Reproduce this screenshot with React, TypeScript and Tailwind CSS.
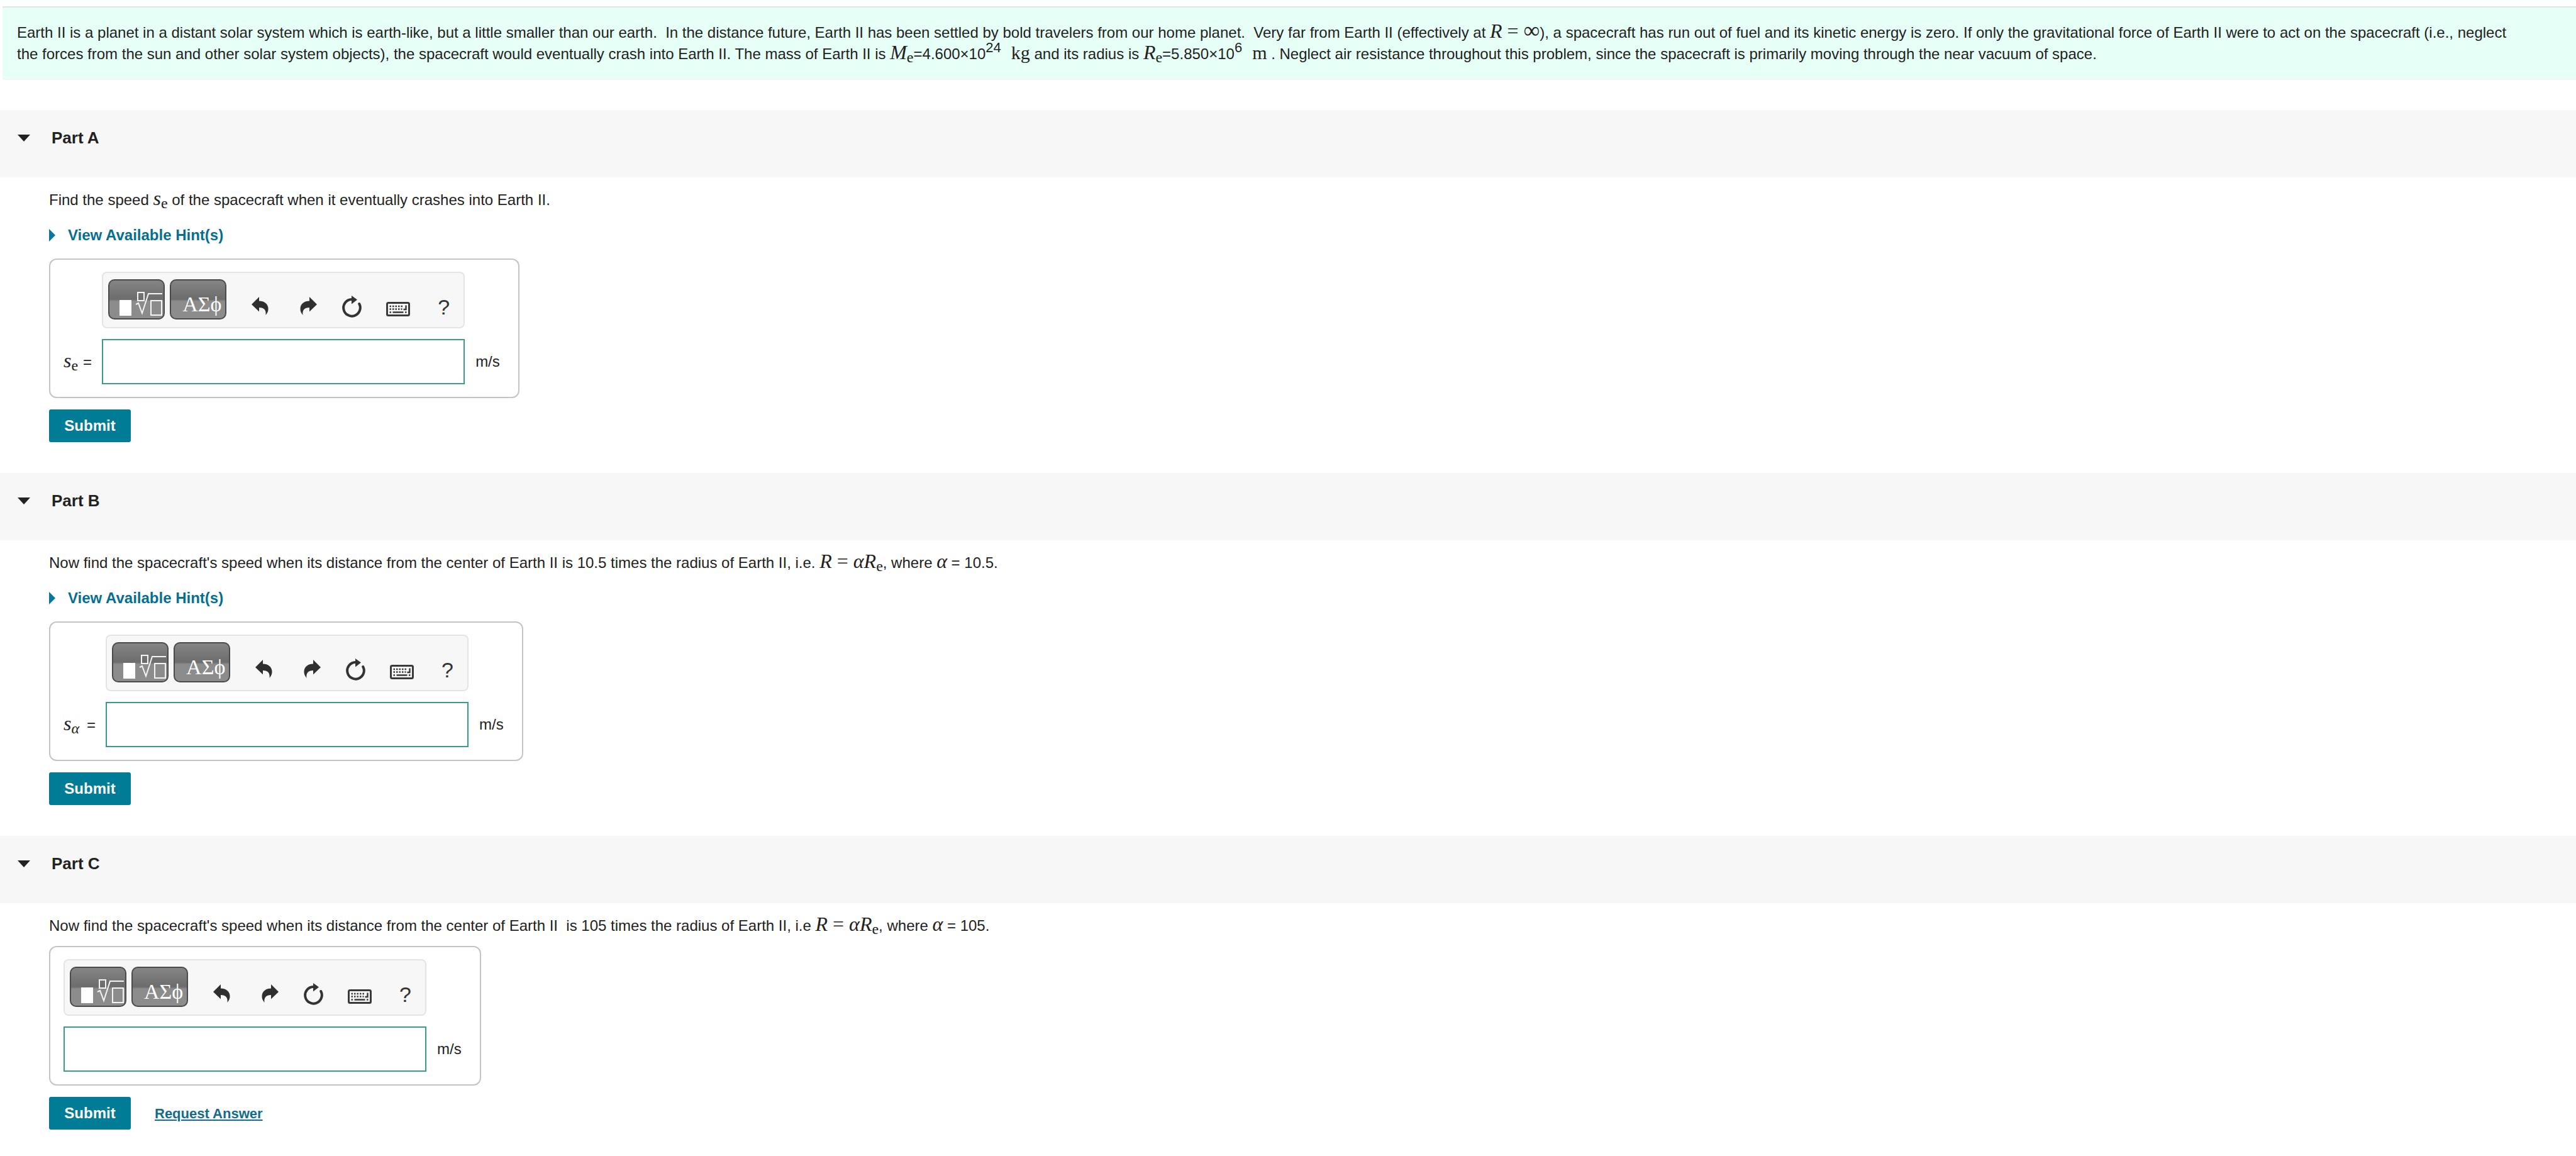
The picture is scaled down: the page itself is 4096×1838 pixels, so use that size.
import type { ReactNode } from "react";

const sans = "font-['Liberation_Sans',Arial,sans-serif]";
const serif = "font-['Liberation_Serif','Times_New_Roman',serif]";

function V({ children }: { children: ReactNode }) {
  return (
    <span className={`${serif} text-[32px] leading-none italic`}>
      {children}
    </span>
  );
}

function Sub({ children, italic = false }: { children: ReactNode; italic?: boolean }) {
  return (
    <sub className={`${serif} static align-[-5px] text-[24px] leading-none ${italic ? "mr-1 italic" : ""}`}>
      {children}
    </sub>
  );
}

function Op({ children }: { children: ReactNode }) {
  return <span className={`${serif} mx-2 text-[32px] leading-none`}>{children}</span>;
}

function Unit({ children }: { children: ReactNode }) {
  return <span className={`${serif} ml-4 text-[30px] leading-none`}>{children}</span>;
}

function Exp({ children }: { children: ReactNode }) {
  return <sup className="static align-[11px] text-[22px] leading-none">{children}</sup>;
}

function TemplatesIcon() {
  return (
    <svg viewBox="0 0 86 60" className="h-[60px] w-[86px]" fill="none" stroke="#f4f4f4" strokeWidth="2" aria-hidden="true">
      <rect x="16" y="31" width="19" height="25" fill="#fff" stroke="none" />
      <rect x="45" y="19" width="10" height="13" />
      <path d="M42 38l4-2 6 16 10-31h22" />
      <rect x="66" y="32" width="17" height="23" />
    </svg>
  );
}

function UndoIcon({ flip = false }: { flip?: boolean }) {
  return (
    <svg viewBox="0 0 28 30" className={`h-[30px] w-7 ${flip ? "-scale-x-100" : ""}`} fill="#2f2f2f" aria-hidden="true">
      <path d="M12 0v6.500C20 6.500 26 11 26.500 18 26.800 22 25.500 25.500 22.500 29 23.500 21 20 17 12 17v6.500L0 12z" />
    </svg>
  );
}

function ResetIcon() {
  return (
    <svg viewBox="0 0 32 36" className="h-9 w-8" aria-hidden="true">
      <path d="M27.200 13A13.300 13.300 0 1 1 15 6" fill="none" stroke="#333" strokeWidth="4" strokeLinecap="round" />
      <path d="M15 0l9 6.500-9 7z" fill="#333" />
    </svg>
  );
}

function KeyboardIcon() {
  return (
    <svg viewBox="0 0 38 23" className="h-[23px] w-[38px]" fill="none" stroke="#3a3a3a" aria-hidden="true">
      <rect x="1.500" y="1.500" width="35" height="20" rx="2" strokeWidth="3" />
      <path d="M5.500 7h22M5.500 11.500h20M5.500 16.500h2.500M30 16.500h2.500" strokeWidth="2.400" strokeDasharray="2.500 2" />
      <path d="M31.500 5.500v6.500h-4M10.500 16.500h17" strokeWidth="2.400" />
    </svg>
  );
}

const gloss =
  "h-16 w-[90px] overflow-hidden rounded-[10px] border-2 border-[#4a4a4a] bg-linear-to-b from-[#858585] from-0% via-[#6c6c6c] via-50% to-[#8c8c8c] to-55%";

function Toolbar() {
  return (
    <div className="flex h-[90px] items-start rounded-lg border-2 border-[#e4e4e4] bg-[#f7f7f7] pt-[10px] pl-2">
      <button type="button" aria-label="Templates" className={gloss}>
        <TemplatesIcon />
      </button>
      <button type="button" aria-label="Symbols" className={`${gloss} ml-2 pt-4 pl-[18px] text-left ${serif} text-[34px] leading-none whitespace-nowrap text-white`}>
        ΑΣϕ
      </button>
      <button type="button" aria-label="Undo" className="mt-7 ml-10">
        <UndoIcon />
      </button>
      <button type="button" aria-label="Redo" className="mt-7 ml-12">
        <UndoIcon flip />
      </button>
      <button type="button" aria-label="Reset" className="mt-[26px] ml-10">
        <ResetIcon />
      </button>
      <button type="button" aria-label="Keyboard shortcuts" className="mt-9 ml-[38px]">
        <KeyboardIcon />
      </button>
      <button type="button" aria-label="Help" className="mt-[26px] ml-11 text-[34px] leading-9 text-[#333]">
        ?
      </button>
    </div>
  );
}

type PartProps = {
  id: string;
  prompt: ReactNode;
  label?: ReactNode;
  hints?: boolean;
  requestAnswer?: boolean;
};

function Part({ id, prompt, label, hints = false, requestAnswer = false }: PartProps) {
  const inputId = `answer-${id}`;
  return (
    <section>
      <h2 className="h-[107px] bg-[#f7f7f7] pt-[26px]">
        <button type="button" aria-expanded="true" className="flex items-center text-[26px] leading-9 font-bold text-[#222]">
          <svg viewBox="0 0 20 11" className="ml-7 h-[11px] w-5" fill="#222" aria-hidden="true">
            <path d="M0 0h20L10 11z" />
          </svg>
          <span className="ml-[34px]">Part {id}</span>
        </button>
      </h2>
      <div className="flex flex-col items-start pt-[17px] pl-[78px]">
        <p className="h-[35px] text-[24px] leading-[35px] whitespace-pre text-[#222]">{prompt}</p>
        {hints && (
          <button type="button" className="mt-[22px] mb-1 flex h-[35px] items-center text-[24px] leading-[35px] font-bold text-[#056f92]">
            <svg viewBox="0 0 10 20" className="h-5 w-[10px]" fill="#0b76a0" aria-hidden="true">
              <path d="M0 0l10 10L0 20z" />
            </svg>
            <span className="ml-5">View Available Hint(s)</span>
          </button>
        )}
        <div className="mt-4 grid grid-cols-[auto_577px_auto] rounded-xl border-2 border-[#c4c4c4] pt-[19px] pr-[29px] pb-5 pl-[21px]">
          <div className="col-start-2">
            <Toolbar />
          </div>
          {label && (
            <label htmlFor={inputId} className="col-start-1 row-start-2 mt-[17px] mr-4 self-center text-[24px] whitespace-nowrap text-[#222]">
              {label}
              <span className="ml-2">=</span>
            </label>
          )}
          <input
            id={inputId}
            type="text"
            aria-label={label ? undefined : "Speed in m/s"}
            className="col-start-2 row-start-2 mt-[17px] h-[72px] w-full border-2 border-[#3a9c88] bg-white px-3 text-[24px]"
          />
          <span className="col-start-3 row-start-2 mt-[17px] ml-[17px] self-center text-[24px] text-[#222]">m/s</span>
        </div>
        <div className="mt-[18px] flex items-center">
          <button type="submit" className="h-[52px] w-[130px] rounded-[3px] bg-[#007c96] text-[24px] font-bold text-white">
            Submit
          </button>
          {requestAnswer && (
            <a href="#request" className="ml-[38px] text-[22px] font-bold text-[#116d8b] underline">
              Request Answer
            </a>
          )}
        </div>
      </div>
    </section>
  );
}

export default function App() {
  return (
    <main className={`${sans} min-h-screen overflow-hidden bg-white`}>
      <div className="mt-[10px] ml-1 border-y-2 border-t-[#dfe6e3] border-b-[#f1f7f5] bg-[#e6fff7] pt-[18px] pb-[25px] pl-[23px] text-[24px] leading-[35px] whitespace-pre text-[#222]">
        <p className="h-[35px]">
          {"Earth II is a planet in a distant solar system which is earth-like, but a little smaller than our earth.  In the distance future, Earth II has been settled by bold travelers from our home planet.  Very far from Earth II (effectively at "}
          <V>R</V>
          <Op>=</Op>
          <span className={`${serif} text-[36px] leading-none`}>∞</span>
          {"), a spacecraft has run out of fuel and its kinetic energy is zero. If only the gravitational force of Earth II were to act on the spacecraft (i.e., neglect"}
        </p>
        <p className="h-[35px]">
          {"the forces from the sun and other solar system objects), the spacecraft would eventually crash into Earth II. The mass of Earth II is "}
          <V>M</V>
          <Sub>e</Sub>=4.600×10<Exp>24</Exp>
          <Unit>kg</Unit>
          {" and its radius is "}
          <V>R</V>
          <Sub>e</Sub>=5.850×10<Exp>6</Exp>
          <Unit>m</Unit>
          {" . Neglect air resistance throughout this problem, since the spacecraft is primarily moving through the near vacuum of space."}
        </p>
      </div>
      <div className="mt-12 flex flex-col gap-[49px]">
        <Part
          id="A"
          hints
          label={<><V>s</V><Sub>e</Sub></>}
          prompt={<>Find the speed <V>s</V><Sub>e</Sub> of the spacecraft when it eventually crashes into Earth II.</>}
        />
        <Part
          id="B"
          hints
          label={<><V>s</V><Sub italic>α</Sub></>}
          prompt={
            <>
              Now find the spacecraft's speed when its distance from the center of Earth II is 10.5 times the radius of Earth II, i.e. <V>R</V>
              <Op>=</Op>
              <V>αR</V>
              <Sub>e</Sub>, where <V>α</V> = 10.5.
            </>
          }
        />
        <Part
          id="C"
          requestAnswer
          prompt={
            <>
              {"Now find the spacecraft's speed when its distance from the center of Earth II  is 105 times the radius of Earth II, i.e "}
              <V>R</V>
              <Op>=</Op>
              <V>αR</V>
              <Sub>e</Sub>, where <V>α</V> = 105.
            </>
          }
        />
      </div>
    </main>
  );
}
